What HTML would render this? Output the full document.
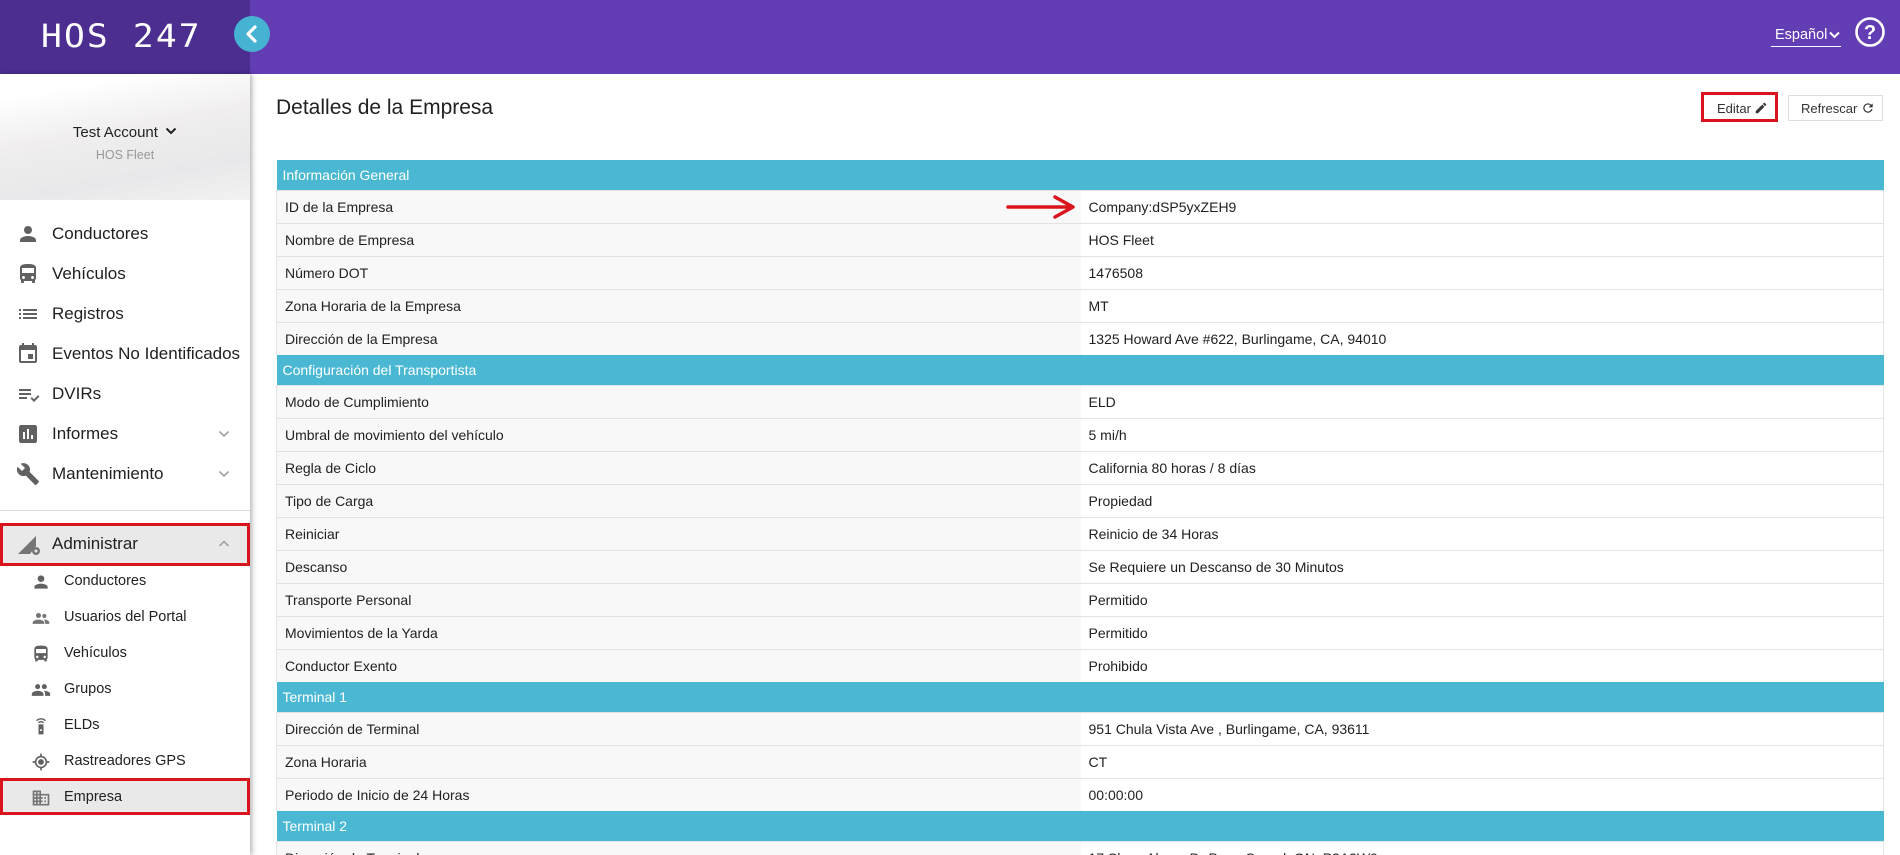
<!DOCTYPE html>
<html><head><meta charset="utf-8">
<style>
*{box-sizing:border-box;margin:0;padding:0}
html,body{width:1900px;height:855px;overflow:hidden}
body{font-family:"Liberation Sans",Roboto,sans-serif;background:#fff;position:relative;color:#212121}
.top{position:absolute;left:0;top:0;width:1900px;height:74px;background:#633db3}
.logo{position:absolute;left:0;top:0;width:250px;height:74px;background:#4b2e90;overflow:hidden}
.logo span{position:absolute;left:41px;top:17px;color:#fff;font-size:32px;line-height:38px;letter-spacing:2px;font-family:"DejaVu Sans Mono",monospace;transform:scaleX(1.08);transform-origin:left;white-space:nowrap}
.back{position:absolute;left:234px;top:16px;width:36px;height:36px;border-radius:50%;background:#47b3d3}
.side{position:absolute;left:0;top:74px;width:250px;height:781px;background:#fff;box-shadow:2px 0 5px rgba(0,0,0,.3)}
.acct{position:absolute;left:0;top:0;width:250px;height:126px;background:linear-gradient(170deg,#fff 15%,#f0eeee 45%,#e8e8ea 75%,#f2f2f2 100%)}
.mi{position:absolute;left:0;width:250px;font-size:17px;color:#212121}
.mi .t{position:absolute;left:52px;top:-10px}
.mi svg{position:absolute;left:16px;top:-12px}
.si{position:absolute;left:0;width:250px;font-size:14.5px;color:#212121}
.si .t{position:absolute;left:64px;top:-9px}
.si svg{position:absolute;left:31px;top:-10px}
.mi svg.ch{left:218px;top:-4px}
.box{position:absolute;left:0;width:250px;border:3px solid #d9141c;background:#e9e9e9}
table{position:absolute;left:276px;top:160px;width:1608px;border-collapse:collapse;font-size:14px}
td{height:33px;padding:0 8px;border-top:1px solid #e3e3e3;vertical-align:middle}
td:first-child{background:#f8f8f8;width:804px;border-left:1px solid #e3e3e3}
td:last-child{background:#fff;border-right:1px solid #e3e3e3}
tr.h td{background:#4ab8d3;color:#fff;height:30px;padding-left:6px;border:none}
</style></head><body>
<div class="top"></div>
<div class="logo"><span>HOS 247</span></div>
<div class="back"><svg width="36" height="36"><path d="M21 11 L14 18 L21 25" stroke="#fff" stroke-width="3.2" fill="none" stroke-linecap="round" stroke-linejoin="round"/></svg></div>
<div style="position:absolute;left:1775px;top:27px;color:#fff;font-size:14.5px">Español</div>
<svg style="position:absolute;left:1829px;top:31px" width="11" height="8"><path d="M1 1.5 L5.5 6 L10 1.5" stroke="#fff" stroke-width="2" fill="none"/></svg>
<div style="position:absolute;left:1771px;top:46px;width:70px;height:1px;background:#fff"></div>
<svg style="position:absolute;left:1854px;top:16px" width="32" height="32"><circle cx="16" cy="16" r="13.5" stroke="#fff" stroke-width="2.6" fill="none"/><text x="16" y="23" text-anchor="middle" fill="#fff" font-size="20" font-family="Liberation Sans" font-weight="bold">?</text></svg>

<div class="side">
<div class="acct"></div>
<div style="position:absolute;left:0;width:250px;top:50px;text-align:center;font-size:15px;color:#222">Test Account <svg width="12" height="8" style="margin-left:3px;vertical-align:2px"><path d="M1.5 1.5 L6 6 L10.5 1.5" stroke="#222" stroke-width="2" fill="none"/></svg></div>
<div style="position:absolute;left:0;width:250px;top:74px;text-align:center;font-size:12.5px;color:#999">HOS Fleet</div>
<div style="position:absolute;left:0;top:436px;width:250px;height:1px;background:#ddd"></div>
</div>

<div class="mi" style="top:234px"><svg width="24" height="24" viewBox="0 0 24 24"><path fill="#616161" d="M12 12c2.2 0 4-1.8 4-4s-1.8-4-4-4-4 1.8-4 4 1.8 4 4 4zm0 2c-2.7 0-8 1.3-8 4v2h16v-2c0-2.7-5.3-4-8-4z"/></svg><span class="t">Conductores</span></div>
<div class="mi" style="top:274px"><svg width="24" height="24" viewBox="0 0 24 24"><path fill="#616161" d="M4 16c0 .9.4 1.7 1 2.2V20c0 .6.4 1 1 1h1c.6 0 1-.4 1-1v-1h8v1c0 .6.4 1 1 1h1c.6 0 1-.4 1-1v-1.8c.6-.5 1-1.3 1-2.2V6c0-3.5-3.6-4-8-4s-8 .5-8 4v10zm3.5 1c-.8 0-1.5-.7-1.5-1.5S6.7 14 7.5 14s1.5.7 1.5 1.5S8.3 17 7.5 17zm9 0c-.8 0-1.5-.7-1.5-1.5s.7-1.5 1.5-1.5 1.5.7 1.5 1.5-.7 1.5-1.5 1.5zm1.5-6H6V6h12v5z"/></svg><span class="t">Vehículos</span></div>
<div class="mi" style="top:314px"><svg width="24" height="24" viewBox="0 0 24 24"><path fill="#616161" d="M3 13h2v-2H3v2zm0 4h2v-2H3v2zm0-8h2V7H3v2zm4 4h14v-2H7v2zm0 4h14v-2H7v2zM7 7v2h14V7H7z"/></svg><span class="t">Registros</span></div>
<div class="mi" style="top:354px"><svg width="24" height="24" viewBox="0 0 24 24"><path fill="#616161" d="M17 12h-5v5h5v-5zM16 1v2H8V1H6v2H5c-1.1 0-2 .9-2 2v14c0 1.1.9 2 2 2h14c1.1 0 2-.9 2-2V5c0-1.1-.9-2-2-2h-1V1h-2zm3 18H5V8h14v11z"/></svg><span class="t">Eventos No Identificados</span></div>
<div class="mi" style="top:394px"><svg width="24" height="24" viewBox="0 0 24 24"><path fill="#616161" d="M3 7h12v2H3zm0 4h12v2H3zm0 4h8v2H3zm11.5 1.5l1.4-1.4 2.1 2.1 4.1-4.1 1.4 1.4-5.5 5.5z"/></svg><span class="t">DVIRs</span></div>
<div class="mi" style="top:434px"><svg width="24" height="24" viewBox="0 0 24 24"><path fill="#616161" d="M19 3H5c-1.1 0-2 .9-2 2v14c0 1.1.9 2 2 2h14c1.1 0 2-.9 2-2V5c0-1.1-.9-2-2-2zM9 17H7v-7h2v7zm4 0h-2V7h2v10zm4 0h-2v-4h2v4z"/></svg><span class="t">Informes</span><svg class="ch" width="12" height="8"><path d="M1.5 1.5 L6 6 L10.5 1.5" stroke="#999" stroke-width="1.5" fill="none"/></svg></div>
<div class="mi" style="top:474px"><svg width="24" height="24" viewBox="0 0 24 24"><path fill="#616161" d="M22.7 19l-9.1-9.1c.9-2.3.4-5-1.5-6.9-2-2-5-2.4-7.4-1.3L9 6 6 9 1.6 4.7C.4 7.1.9 10.1 2.9 12.1c1.9 1.9 4.6 2.4 6.9 1.5l9.1 9.1c.4.4 1 .4 1.4 0l2.3-2.3c.5-.4.5-1.1.1-1.4z"/></svg><span class="t">Mantenimiento</span><svg class="ch" width="12" height="8"><path d="M1.5 1.5 L6 6 L10.5 1.5" stroke="#999" stroke-width="1.5" fill="none"/></svg></div>

<div class="box" style="top:523px;height:43px"></div>
<div class="mi" style="top:544px"><svg width="28" height="26" viewBox="0 0 28 26"><path fill="#757575" d="M2 22 L20 4 L20 14 L14 22z"/><circle cx="20" cy="19" r="4" fill="#757575"/><circle cx="20" cy="19" r="1.5" fill="#e9e9e9"/></svg><span class="t">Administrar</span><svg class="ch" width="12" height="8"><path d="M1.5 6 L6 1.5 L10.5 6" stroke="#999" stroke-width="1.5" fill="none"/></svg></div>

<div class="si" style="top:582px"><svg width="20" height="20" viewBox="0 0 24 24"><path fill="#616161" d="M12 12c2.2 0 4-1.8 4-4s-1.8-4-4-4-4 1.8-4 4 1.8 4 4 4zm0 2c-2.7 0-8 1.3-8 4v2h16v-2c0-2.7-5.3-4-8-4z"/></svg><span class="t">Conductores</span></div>
<div class="si" style="top:618px"><svg width="20" height="20" viewBox="0 0 24 24"><path fill="#757575" d="M9 12a3 3 0 100-6 3 3 0 000 6zm7 0a2.5 2.5 0 100-5 2.5 2.5 0 000 5zM9 14c-2.5 0-7 1.2-7 3.5V19h14v-1.5C16 15.2 11.5 14 9 14zm7 0c-.3 0-.6 0-1 .1 1.2.8 2 1.9 2 3.4V19h5v-1.5c0-2.3-4.3-3.5-6-3.5z"/></svg><span class="t">Usuarios del Portal</span></div>
<div class="si" style="top:654px"><svg width="20" height="20" viewBox="0 0 24 24"><path fill="#616161" d="M4 16c0 .9.4 1.7 1 2.2V20c0 .6.4 1 1 1h1c.6 0 1-.4 1-1v-1h8v1c0 .6.4 1 1 1h1c.6 0 1-.4 1-1v-1.8c.6-.5 1-1.3 1-2.2V6c0-3.5-3.6-4-8-4s-8 .5-8 4v10zm3.5 1c-.8 0-1.5-.7-1.5-1.5S6.7 14 7.5 14s1.5.7 1.5 1.5S8.3 17 7.5 17zm9 0c-.8 0-1.5-.7-1.5-1.5s.7-1.5 1.5-1.5 1.5.7 1.5 1.5-.7 1.5-1.5 1.5zm1.5-6H6V6h12v5z"/></svg><span class="t">Vehículos</span></div>
<div class="si" style="top:690px"><svg width="20" height="20" viewBox="0 0 24 24"><path fill="#616161" d="M16 11c1.7 0 3-1.3 3-3s-1.3-3-3-3-3 1.3-3 3 1.3 3 3 3zm-8 0c1.7 0 3-1.3 3-3S9.7 5 8 5 5 6.3 5 8s1.3 3 3 3zm0 2c-2.3 0-7 1.2-7 3.5V19h14v-2.5c0-2.3-4.7-3.5-7-3.5zm8 0c-.3 0-.6 0-1 .1 1.2.8 2 1.9 2 3.4V19h6v-2.5c0-2.3-4.7-3.5-7-3.5z"/></svg><span class="t">Grupos</span></div>
<div class="si" style="top:726px"><svg width="20" height="20" viewBox="0 0 24 24"><path fill="#616161" d="M9 10h6v12H9z M6 5q6-5 12 0l-1.2 1.2q-4.8-4-9.6 0z M8.2 7.4q3.8-3 7.6 0l-1.2 1.2q-2.6-2-5.2 0z"/><circle cx="12" cy="17" r="1.2" fill="#fff"/></svg><span class="t">ELDs</span></div>
<div class="si" style="top:762px"><svg width="20" height="20" viewBox="0 0 24 24"><circle cx="12" cy="12" r="6.5" stroke="#616161" stroke-width="2" fill="none"/><circle cx="12" cy="12" r="3.5" fill="#616161"/><path d="M12 2v4M12 18v4M2 12h4M18 12h4" stroke="#616161" stroke-width="2"/></svg><span class="t">Rastreadores GPS</span></div>
<div class="box" style="top:778px;height:37px"></div>
<div class="si" style="top:798px"><svg width="20" height="20" viewBox="0 0 24 24"><path fill="#757575" d="M12 7V3H2v18h20V7H12zM6 19H4v-2h2v2zm0-4H4v-2h2v2zm0-4H4V9h2v2zm0-4H4V5h2v2zm4 12H8v-2h2v2zm0-4H8v-2h2v2zm0-4H8V9h2v2zm0-4H8V5h2v2zm10 12h-8v-2h2v-2h-2v-2h2v-2h-2V9h8v10zm-2-8h-2v2h2v-2zm0 4h-2v2h2v-2z"/></svg><span class="t">Empresa</span></div>

<div style="position:absolute;left:276px;top:96px;font-size:21px;color:#212121">Detalles de la Empresa</div>
<div style="position:absolute;left:1701px;top:92px;width:77px;height:30px;border:3px solid #d9141c;background:#fff;font-size:13px;color:#333;padding:6px 0 0 13px">Editar
<svg style="position:absolute;left:50px;top:6px" width="14" height="14" viewBox="0 0 24 24"><path fill="#333" d="M3 17.25V21h3.75L17.8 9.9l-3.7-3.7L3 17.25zM20.7 7c.4-.4.4-1 0-1.4l-2.3-2.3c-.4-.4-1-.4-1.4 0l-1.8 1.8 3.7 3.7L20.7 7z"/></svg></div>
<div style="position:absolute;left:1788px;top:95px;width:95px;height:26px;border:1px solid #ddd;background:#fff;font-size:13px;color:#333;padding:5px 0 0 12px">Refrescar
<svg style="position:absolute;left:72px;top:5px" width="14" height="14" viewBox="0 0 24 24"><path fill="#333" d="M17.6 6.4A8 8 0 1019.7 14h-2.1a6 6 0 11-1.4-6.2L13 11h7V4l-2.4 2.4z"/></svg></div>

<table>
<tr class="h"><td colspan="2">Información General</td></tr>
<tr><td>ID de la Empresa</td><td>Company:dSP5yxZEH9</td></tr>
<tr><td>Nombre de Empresa</td><td>HOS Fleet</td></tr>
<tr><td>Número DOT</td><td>1476508</td></tr>
<tr><td>Zona Horaria de la Empresa</td><td>MT</td></tr>
<tr><td>Dirección de la Empresa</td><td>1325 Howard Ave #622, Burlingame, CA, 94010</td></tr>
<tr class="h"><td colspan="2">Configuración del Transportista</td></tr>
<tr><td>Modo de Cumplimiento</td><td>ELD</td></tr>
<tr><td>Umbral de movimiento del vehículo</td><td>5 mi/h</td></tr>
<tr><td>Regla de Ciclo</td><td>California 80 horas / 8 días</td></tr>
<tr><td>Tipo de Carga</td><td>Propiedad</td></tr>
<tr><td>Reiniciar</td><td>Reinicio de 34 Horas</td></tr>
<tr><td>Descanso</td><td>Se Requiere un Descanso de 30 Minutos</td></tr>
<tr><td>Transporte Personal</td><td>Permitido</td></tr>
<tr><td>Movimientos de la Yarda</td><td>Permitido</td></tr>
<tr><td>Conductor Exento</td><td>Prohibido</td></tr>
<tr class="h"><td colspan="2">Terminal 1</td></tr>
<tr><td>Dirección de Terminal</td><td>951 Chula Vista Ave , Burlingame, CA, 93611</td></tr>
<tr><td>Zona Horaria</td><td>CT</td></tr>
<tr><td>Periodo de Inicio de 24 Horas</td><td>00:00:00</td></tr>
<tr class="h"><td colspan="2">Terminal 2</td></tr>
<tr><td>Dirección de Terminal</td><td>17 Shaw Alman Dr Parry Sound, ON, P2A2W9</td></tr>
</table>
<svg style="position:absolute;left:1005px;top:193px" width="72" height="28"><path d="M3 14 H66 M50 4 L68 14 L50 24" stroke="#d9141c" stroke-width="3.5" fill="none" stroke-linecap="round" stroke-linejoin="round"/></svg>
</body></html>
